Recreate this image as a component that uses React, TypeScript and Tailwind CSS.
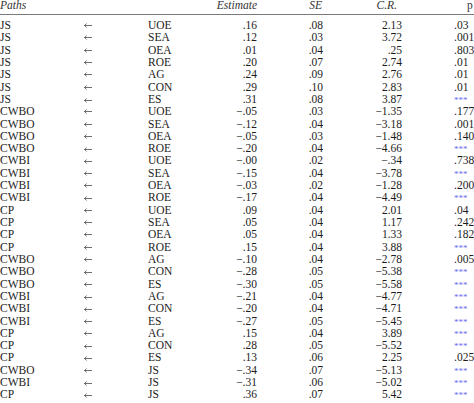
const rows: [string, string, string, string, string, string][] = [
  ['JS', 'UOE', '.16', '.08', '2.13', '.03'],
  ['JS', 'SEA', '.12', '.03', '3.72', '.001'],
  ['JS', 'OEA', '.01', '.04', '.25', '.803'],
  ['JS', 'ROE', '.20', '.07', '2.74', '.01'],
  ['JS', 'AG', '.24', '.09', '2.76', '.01'],
  ['JS', 'CON', '.29', '.10', '2.83', '.01'],
  ['JS', 'ES', '.31', '.08', '3.87', '***'],
  ['CWBO', 'UOE', '−.05', '.03', '−1.35', '.177'],
  ['CWBO', 'SEA', '−.12', '.04', '−3.18', '.001'],
  ['CWBO', 'OEA', '−.05', '.03', '−1.48', '.140'],
  ['CWBO', 'ROE', '−.20', '.04', '−4.66', '***'],
  ['CWBI', 'UOE', '−.00', '.02', '−.34', '.738'],
  ['CWBI', 'SEA', '−.15', '.04', '−3.78', '***'],
  ['CWBI', 'OEA', '−.03', '.02', '−1.28', '.200'],
  ['CWBI', 'ROE', '−.17', '.04', '−4.49', '***'],
  ['CP', 'UOE', '.09', '.04', '2.01', '.04'],
  ['CP', 'SEA', '.05', '.04', '1.17', '.242'],
  ['CP', 'OEA', '.05', '.04', '1.33', '.182'],
  ['CP', 'ROE', '.15', '.04', '3.88', '***'],
  ['CWBO', 'AG', '−.10', '.04', '−2.78', '.005'],
  ['CWBO', 'CON', '−.28', '.05', '−5.38', '***'],
  ['CWBO', 'ES', '−.30', '.05', '−5.58', '***'],
  ['CWBI', 'AG', '−.21', '.04', '−4.77', '***'],
  ['CWBI', 'CON', '−.20', '.04', '−4.71', '***'],
  ['CWBI', 'ES', '−.27', '.05', '−5.45', '***'],
  ['CP', 'AG', '.15', '.04', '3.89', '***'],
  ['CP', 'CON', '.28', '.05', '−5.52', '***'],
  ['CP', 'ES', '.13', '.06', '2.25', '.025'],
  ['CWBO', 'JS', '−.34', '.07', '−5.13', '***'],
  ['CWBI', 'JS', '−.31', '.06', '−5.02', '***'],
  ['CP', 'JS', '.36', '.07', '5.42', '***'],
];

const cols = 'grid grid-cols-[84px_64px_62px_47px_66px_79px_72px]';

const LeftArrow = () => (
  <svg width="8" height="5" viewBox="0 0 8 5" className="mt-[1px]">
    <path d="M0.5 2.5H8" stroke="#4a4a4a" strokeWidth="0.8" />
    <path d="M2.6 0.6L0.5 2.5L2.6 4.4" fill="none" stroke="#4a4a4a" strokeWidth="0.8" />
  </svg>
);

export default function App() {
  return (
    <div
      className="w-[474px] h-[403px] overflow-hidden bg-white text-[#1c1c1c] text-[11.5px]"
      style={{ fontFamily: '"Liberation Serif", "Times New Roman", serif' }}
    >
      <div className={`${cols} h-[15px] leading-[10px] border-b-[1.5px] border-[#7a7a7a] text-[#333]`}>
        <div className="italic">Paths</div>
        <div />
        <div />
        <div className="italic text-right">Estimate</div>
        <div className="italic text-right pr-[1px]">SE</div>
        <div className="italic text-right pr-[5px]">C.R.</div>
        <div className="pl-[65px]">p</div>
      </div>
      <div className="pt-[4px]">
        {rows.map((r, i) => (
          <div key={i} className={`${cols} h-[12.32px] leading-[12.32px]`}>
            <div>{r[0]}</div>
            <div className="flex items-center">
              <LeftArrow />
            </div>
            <div>{r[1]}</div>
            <div className="text-right">{r[2]}</div>
            <div className="text-right">{r[3]}</div>
            <div className="text-right">{r[4]}</div>
            <div className="pl-[52px] whitespace-nowrap">
              {r[5] === '***' ? (
                <span className="text-[#6b6bf0] text-[9px]">***</span>
              ) : (
                r[5]
              )}
            </div>
          </div>
        ))}
      </div>
    </div>
  );
}
